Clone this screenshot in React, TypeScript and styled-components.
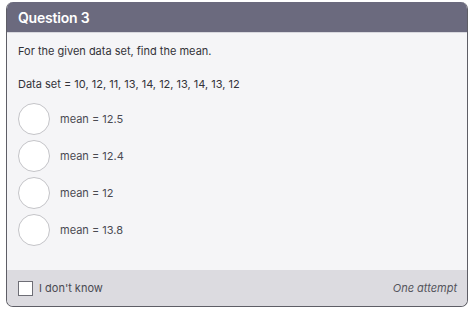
import React, { useState } from 'react';
import styled, { createGlobalStyle } from 'styled-components';

const GlobalStyles = createGlobalStyle`
  html, body {
    margin: 0;
    padding: 0;
    background: #ffffff;
  }
  body {
    font-family: Inter, "Noto Sans", sans-serif;
  }
`;

export const Page = styled.div`
  padding: 2px 6px 0 6px;
  width: 474px;
  box-sizing: border-box;
`;

export const Card = styled.div`
  width: 462px;
  height: 305px;
  box-sizing: border-box;
  border: 1.5px solid #5e5e66;
  border-top: none;
  border-radius: 7px;
  overflow: hidden;
  display: flex;
  flex-direction: column;
  background: #f5f5f7;
`;

export const Header = styled.div`
  height: 30px;
  background: #6b6a7e;
  color: #ffffff;
  font-size: 14px;
  font-weight: 600;
  display: flex;
  align-items: center;
  padding-left: 11px;
  border-bottom: 1px solid #d8d8de;
  letter-spacing: -0.2px;
`;

export const Body = styled.div`
  flex: 1;
  padding: 10px 11px 0 11px;
  color: #333339;
  font-size: 11px;
`;

export const Prompt = styled.p`
  margin: 0;
  line-height: 14px;
  padding-top: 1px;
`;

export const DataLine = styled.p`
  margin: 19px 0 0 0;
  line-height: 14px;
`;

export const Options = styled.div`
  display: flex;
  flex-direction: column;
  gap: 5px;
  margin-top: 12px;
`;

export const Option = styled.label`
  display: flex;
  align-items: center;
  gap: 10px;
  cursor: pointer;
  color: #4a4a52;
`;

export const Radio = styled.span<{ $on: boolean }>`
  width: 30px;
  height: 30px;
  border-radius: 50%;
  border: 1.5px solid #c4c4c8;
  background: ${p => (p.$on ? '#6b6a7e' : '#ffffff')};
  flex-shrink: 0;
`;

export const Footer = styled.div`
  height: 36px;
  background: #dcdbe0;
  display: flex;
  align-items: center;
  justify-content: space-between;
  padding: 0 10px 0 11px;
  font-size: 11px;
  color: #4a4a52;
`;

export const DontKnow = styled.label`
  display: flex;
  align-items: center;
  gap: 6px;
  cursor: pointer;
`;

export const Box = styled.span`
  width: 13px;
  height: 13px;
  background: #ffffff;
  border: 1px solid #6e6e76;
`;

export const Attempt = styled.span`
  font-style: italic;
  color: #55555c;
`;

const choices = ['mean = 12.5', 'mean = 12.4', 'mean = 12', 'mean = 13.8'];

const App = () => {
  const [picked, setPicked] = useState<number | null>(null);

  return (
    <React.Fragment>
      <GlobalStyles />
      <Page>
        <Card>
          <Header>Question 3</Header>
          <Body>
            <Prompt>For the given data set, find the mean.</Prompt>
            <DataLine>Data set = 10, 12, 11, 13, 14, 12, 13, 14, 13, 12</DataLine>
            <Options>
              {choices.map((c, i) => (
                <Option key={i} onClick={() => setPicked(i)}>
                  <Radio $on={picked === i} />
                  <span>{c}</span>
                </Option>
              ))}
            </Options>
          </Body>
          <Footer>
            <DontKnow>
              <Box />
              <span>I don't know</span>
            </DontKnow>
            <Attempt>One attempt</Attempt>
          </Footer>
        </Card>
      </Page>
    </React.Fragment>
  );
};

export default App;
